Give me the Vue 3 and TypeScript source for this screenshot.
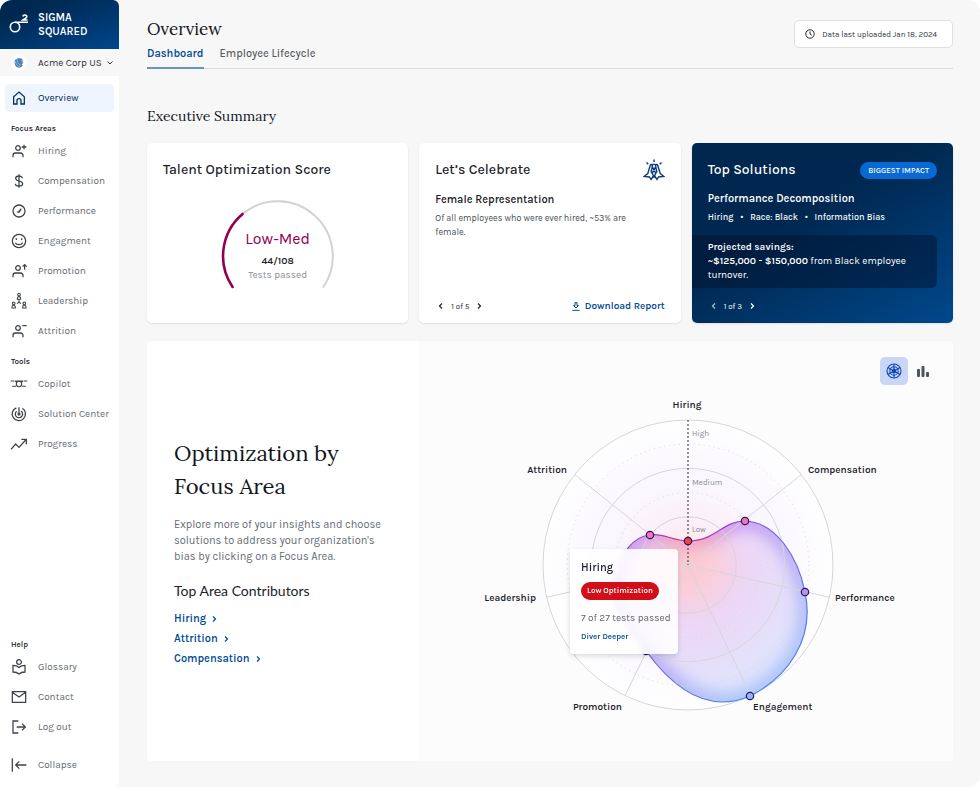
<script setup lang="ts">
import { computed, ref } from 'vue'

interface NavItem {
  label: string
  icon: string
}

const icons: Record<string, string> = {
  home: 'M4 21V10l8-7 8 7v11h-5v-5a3 3 0 0 0-6 0v5z',
  personAdd: 'M14 7.5a3.5 3.5 0 1 1-7 0a3.5 3.5 0 1 1 7 0M3 21.500v-3a3.500 3.500 0 0 1 3.500-3.500h8a3.500 3.500 0 0 1 3.500 3.500v3M19.500 2.500v7M16 6h7',
  dollar: 'M12 2v20M17 8c0-2-2-3.500-5-3.500S7 6 7 8s2 3.200 5 4 5.500 1.800 5.500 4-2.500 3.500-5.500 3.500-5.500-1.500-5.500-3.500',
  gauge: 'M21 12a9 9 0 1 1-18 0a9 9 0 1 1 18 0M10.500 13.500l1.500.5 1-1.500zM12 12.500l3.500-4',
  smile: 'M22 12a10 10 0 1 1-20 0a10 10 0 1 1 20 0M8 8v2.500M16 8v2.500M6.500 14.500c2 4 9 4 11 0',
  personUp: 'M14 7.500a3.500 3.500 0 1 1-7 0a3.500 3.500 0 1 1 7 0M3 21.500v-3a3.500 3.500 0 0 1 3.500-3.500h8a3.500 3.500 0 0 1 3.500 3.500v3M20.500 10V3M17.500 5.500l3-3 3 3',
  team: 'M14 2.500a2 2 0 1 1-4 0a2 2 0 1 1 4 0M9.500 9.500v-1.500a2.500 2.500 0 0 1 5 0v1.500zM6 15.500a2 2 0 1 1-4 0a2 2 0 1 1 4 0M1.500 22.500V21a2.500 2.500 0 0 1 5 0v1.500zM22 15.500a2 2 0 1 1-4 0a2 2 0 1 1 4 0M17.500 22.500V21a2.500 2.500 0 0 1 5 0v1.500zM12 10v4M12 13.500l-3 2.500M12 13.500l3 2.500',
  personMinus: 'M14 7.500a3.500 3.500 0 1 1-7 0a3.500 3.500 0 1 1 7 0M3 21.500v-3a3.500 3.500 0 0 1 3.500-3.500h8a3.500 3.500 0 0 1 3.500 3.500v3M17 4h6.500',
  copilot: 'M-.500 7.500H5M19 7.500h5.500M7 7.500h10M3 15.500h4.500M16.500 15.500H21M16 12a4 4 0 1 1-8 0a4 4 0 1 1 8 0M6 7.500l3 2M18 7.500l-3 2M3 15.500l-1 .5M21 15.500l1 .5',
  radar: 'M17 3.500A10 10 0 1 1 8 2.700M15 7.500a5.500 5.500 0 1 1-6.500.3M12 2v9M13.500 12a1.500 1.500 0 1 1-3 0a1.500 1.500 0 1 1 3 0M20 6a10 10 0 0 1 1 9',
  trend: 'M0 20l7-8 5 5 10-11M15.500 5H23v7.500',
  reader: 'M15.500 4.500a3.500 3.500 0 1 1-7 0a3.500 3.500 0 1 1 7 0M3 9.500c4 0 7 1.200 9 3.200 2-2 5-3.200 9-3.200v10c-4 0-7 1-9 3-2-2-5-3-9-3z',
  mail: 'M2 4h20v16H2zM2 5l10 7 10-7',
  logout: 'M11 3H3v18h8M8.500 12H21M16.500 7l5 5-5 5',
  collapse: 'M2 2v20M23 12H7M12.500 6.500L7 12l5.500 5.500',
}

const focusAreas: NavItem[] = [
  { label: 'Hiring', icon: 'personAdd' },
  { label: 'Compensation', icon: 'dollar' },
  { label: 'Performance', icon: 'gauge' },
  { label: 'Engagment', icon: 'smile' },
  { label: 'Promotion', icon: 'personUp' },
  { label: 'Leadership', icon: 'team' },
  { label: 'Attrition', icon: 'personMinus' },
]
const tools: NavItem[] = [
  { label: 'Copilot', icon: 'copilot' },
  { label: 'Solution Center', icon: 'radar' },
  { label: 'Progress', icon: 'trend' },
]
const help: NavItem[] = [
  { label: 'Glossary', icon: 'reader' },
  { label: 'Contact', icon: 'mail' },
  { label: 'Log out', icon: 'logout' },
]
const groups = [
  { title: 'Focus Areas', items: focusAreas, bottom: false },
  { title: 'Tools', items: tools, bottom: false },
  { title: 'Help', items: help, bottom: true },
]
const contributors: string[] = ['Hiring', 'Attrition', 'Compensation']

const view = ref<'radar' | 'bars'>('radar')

const RADIUS = 145
const rings = [1, 2, 3, 4, 5, 6].map((n) => ({ r: (RADIUS * n) / 6, dotted: n % 2 === 1 }))
const spokes = computed(() =>
  [1, 2, 3, 4, 5, 6].map((n) => {
    const a = (n * 2 * Math.PI) / 7
    return { x: RADIUS * Math.sin(a), y: -RADIUS * Math.cos(a) }
  }),
)
const points = [
  { x: 0, y: -24, fill: '#f2404a' },
  { x: 57, y: -44, fill: '#f573b8' },
  { x: 117, y: 27, fill: '#b295ee' },
  { x: 62, y: 131, fill: '#92b4f5' },
  { x: -42, y: 86, fill: '#92a0f5' },
  { x: -71, y: 16, fill: '#f573b8' },
  { x: -38, y: -30, fill: '#f573b8' },
]
const blob =
  'M0-24C28-24 34-44 57-44C88-43 110-8 117 27C127 74 100 112 62 131C23 148-12 127-42 86C-61 60-82 44-71 11C-67-12-56-28-38-30C-26-33-16-24 0-24Z'
const axes = [
  { label: 'Hiring', x: -1, y: -157, anchor: 'middle' },
  { label: 'Compensation', x: 120, y: -92, anchor: 'start' },
  { label: 'Performance', x: 147, y: 36, anchor: 'start' },
  { label: 'Engagement', x: 65, y: 145, anchor: 'start' },
  { label: 'Promotion', x: -66, y: 145, anchor: 'end' },
  { label: 'Leadership', x: -152, y: 36, anchor: 'end' },
  { label: 'Attrition', x: -121, y: -92, anchor: 'end' },
] as const
const levels = [
  { label: 'High', y: -129 },
  { label: 'Medium', y: -80 },
  { label: 'Low', y: -33 },
]
</script>

<template>
  <div class="app">
    <aside class="sidebar">
      <a class="brand" href="#">
        <svg class="brand-mark" viewBox="0 0 20 20" aria-hidden="true">
          <circle cx="6" cy="12" r="4.700" />
          <path d="M6 7.300h13" />
          <path d="M13.800 1.500c.4-2 4-2 4 .2 0 1.200-2 2-3.800 3.300h4.500" />
        </svg>
        <span>SIGMA<br />SQUARED</span>
      </a>
      <button class="org" type="button">
        <svg class="org-mark" viewBox="0 0 16 16" aria-hidden="true">
          <circle cx="8" cy="8" r="8" fill="#fff" />
          <path d="M4 5c2-2 5-2 8-1l-2 1.500h2.500L11 7h1.500L11 8.500h1L10.500 10H12c-1 2-3 3-5 2.500C4 12 3 8 4 5z" fill="#4d80b8" />
          <path d="M4 6c1 3 2 5 5 6M6 4c0 3 1 5 4 6.500" stroke="#a9c5e2" stroke-width=".7" fill="none" />
        </svg>
        <span>Acme Corp US</span>
        <svg class="chev" viewBox="0 0 8 8" aria-hidden="true"><path d="M1.500 2.500L4 5l2.500-2.500" /></svg>
      </button>
      <nav class="nav" aria-label="Main">
        <a class="nav-item active" href="#">
          <svg class="icon" viewBox="0 0 24 24" aria-hidden="true"><path :d="icons.home" /></svg>
          <span>Overview</span>
        </a>
        <section v-for="g in groups" :key="g.title" class="group" :class="{ bottom: g.bottom }">
          <h2>{{ g.title }}</h2>
          <a v-for="item in g.items" :key="item.label" class="nav-item" href="#">
            <svg class="icon" :class="{ thin: item.icon === 'team' || item.icon === 'copilot' }" viewBox="0 0 24 24" aria-hidden="true"><path :d="icons[item.icon]" /></svg>
            <span>{{ item.label }}</span>
          </a>
        </section>
        <button class="nav-item collapse" type="button">
          <svg class="icon" viewBox="0 0 24 24" aria-hidden="true"><path :d="icons.collapse" /></svg>
          <span>Collapse</span>
        </button>
      </nav>
    </aside>

    <main class="main">
      <header class="header">
        <div class="heading">
          <h1>Overview</h1>
          <nav class="tabs" aria-label="Sections">
            <a class="tab on" href="#">Dashboard</a>
            <a class="tab" href="#">Employee Lifecycle</a>
          </nav>
        </div>
        <div class="updated">
          <svg viewBox="0 0 10 10" aria-hidden="true"><circle cx="5" cy="5" r="4.200" /><path d="M5 2.500V5l1.800 1.300" /></svg>
          <span>Data last uploaded Jan 18, 2024</span>
        </div>
      </header>

      <h2 class="section-title">Executive Summary</h2>

      <div class="cards">
        <article class="card">
          <h3 class="card-title">Talent Optimization Score</h3>
          <div class="gauge">
            <svg viewBox="0 0 116 90" aria-hidden="true">
              <path class="track" d="M22.600 15A55 55 0 0 1 103.400 88" />
              <path class="value" d="M12.600 88A55 55 0 0 1 22.600 15" />
            </svg>
            <div class="gauge-text">
              <strong class="grade">Low-Med</strong>
              <span class="count">44/108</span>
              <span class="caption">Tests passed</span>
            </div>
          </div>
        </article>

        <article class="card">
          <div class="card-head">
            <h3 class="card-title">Let’s Celebrate</h3>
            <svg class="celebrate" viewBox="0 0 22 22" aria-hidden="true">
              <path d="M11 .5v2.500M3.500 3.500L5.300 5.300M18.500 3.500l-1.800 1.800M11 16l-3 4.500-1.500-2.500L1 17.500 4.800 14.500l2.400-8c.6-1.600 2.600-1.200 2.200.6L8 13.500M11 16l3 4.500 1.500-2.500 5.500-.5-3.800-3-2.400-8c-.6-1.600-2.600-1.200-2.200.6L14 13.500M9.400 6.500c.2-1.800 3-1.800 3.200 0l1 6L11 18l-2.600-5.500zM9 15l3.500-7M13 15L9.500 8" />
            </svg>
          </div>
          <h4 class="card-sub">Female Representation</h4>
          <p class="card-body">Of all employees who were ever hired, ~53% are female.</p>
          <footer class="card-foot">
            <div class="pager">
              <button type="button" aria-label="Previous"><svg viewBox="0 0 8 8"><path d="M5 1.500L2.500 4 5 6.500" /></svg></button>
              <span>1 of 5</span>
              <button type="button" aria-label="Next"><svg viewBox="0 0 8 8"><path d="M3 1.500L5.500 4 3 6.500" /></svg></button>
            </div>
            <a class="download" href="#">
              <svg viewBox="0 0 8 9" aria-hidden="true"><path d="M3 .6h2v2.900h1.500L4 6 1.500 3.500H3zM.5 8.300h7" /></svg>
              Download Report
            </a>
          </footer>
        </article>

        <article class="card dark">
          <div class="card-head">
            <h3 class="card-title">Top Solutions</h3>
            <span class="badge">BIGGEST IMPACT</span>
          </div>
          <h4 class="card-sub">Performance Decomposition</h4>
          <ul class="tags">
            <li>Hiring</li>
            <li>Race: Black</li>
            <li>Information Bias</li>
          </ul>
          <div class="savings">
            <strong>Projected savings:</strong><br />
            <strong>~$125,000 - $150,000</strong> from Black employee turnover.
          </div>
          <footer class="card-foot">
            <div class="pager">
              <button type="button" class="dim" aria-label="Previous"><svg viewBox="0 0 8 8"><path d="M5 1.500L2.500 4 5 6.500" /></svg></button>
              <span>1 of 3</span>
              <button type="button" aria-label="Next"><svg viewBox="0 0 8 8"><path d="M3 1.500L5.500 4 3 6.500" /></svg></button>
            </div>
          </footer>
        </article>
      </div>

      <section class="panel">
        <div class="intro">
          <h2>Optimization by Focus Area</h2>
          <p>Explore more of your insights and choose solutions to address your organization's bias by clicking on a Focus Area.</p>
          <h3>Top Area Contributors</h3>
          <ul>
            <li v-for="c in contributors" :key="c">
              <a href="#">{{ c }}<svg viewBox="0 0 8 8" aria-hidden="true"><path d="M3 1.500L5.500 4 3 6.500" /></svg></a>
            </li>
          </ul>
        </div>

        <div class="chart-side">
          <div class="switch">
            <button type="button" :class="{ on: view === 'radar' }" aria-label="Radar view" @click="view = 'radar'">
              <svg class="radar-icon" viewBox="0 0 16 16">
                <circle cx="8" cy="8" r="7" />
                <circle cx="8" cy="8" r="4.200" />
                <path d="M8 1v14M1.900 4.500l12.200 7M1.900 11.500l12.200-7M8 5.500L10.200 9.300H5.800z" />
                <circle cx="8" cy="8" r="1.500" />
              </svg>
            </button>
            <button type="button" :class="{ on: view === 'bars' }" aria-label="Bar view" @click="view = 'bars'">
              <svg class="bars-icon" viewBox="0 0 12 12">
                <rect x="0" y="4" width="3" height="8" rx="1" />
                <rect x="4.500" y="1" width="3" height="11" rx="1" />
                <rect x="9" y="7" width="3" height="5" rx="1" />
              </svg>
            </button>
          </div>

          <div class="stage">
            <svg class="radar" viewBox="0 0 421 330" role="img" aria-label="Optimization by focus area">
              <defs>
                <radialGradient id="halo" gradientUnits="userSpaceOnUse" cx="0" cy="0" r="145">
                  <stop offset="0" stop-color="#ffd3d9" stop-opacity=".7" />
                  <stop offset=".3" stop-color="#fce6f3" stop-opacity=".6" />
                  <stop offset=".55" stop-color="#f8f3ff" stop-opacity=".6" />
                  <stop offset="1" stop-color="#ffffff" stop-opacity=".9" />
                </radialGradient>
                <radialGradient id="body" gradientUnits="userSpaceOnUse" cx="0" cy="0" r="145">
                  <stop offset="0" stop-color="#fcc8d0" />
                  <stop offset=".2" stop-color="#f9cfdd" />
                  <stop offset=".4" stop-color="#edd6f6" />
                  <stop offset=".7" stop-color="#e5dffa" />
                  <stop offset="1" stop-color="#dde6fd" />
                </radialGradient>
                <radialGradient id="edge" gradientUnits="userSpaceOnUse" cx="0" cy="0" r="145">
                  <stop offset=".15" stop-color="#c43383" />
                  <stop offset=".3" stop-color="#a23fc4" />
                  <stop offset=".5" stop-color="#8450e0" />
                  <stop offset=".75" stop-color="#7468e6" />
                  <stop offset="1" stop-color="#4d80ea" />
                </radialGradient>
                <radialGradient id="glow" gradientUnits="userSpaceOnUse" cx="0" cy="0" r="145">
                  <stop offset=".15" stop-color="#f08aa8" />
                  <stop offset=".4" stop-color="#b56cee" />
                  <stop offset=".7" stop-color="#a08af4" />
                  <stop offset="1" stop-color="#86aef8" />
                </radialGradient>
                <clipPath id="inside"><path :d="blob" /></clipPath>
                <filter id="soft" x="-30%" y="-30%" width="160%" height="160%"><feGaussianBlur stdDeviation="8" /></filter>
              </defs>
              <g transform="translate(213 170)">
                <circle r="145" fill="url(#halo)" />
                <path :d="blob" fill="url(#body)" />
                <g clip-path="url(#inside)">
                  <path :d="blob" fill="none" stroke="url(#glow)" stroke-width="14" filter="url(#soft)" opacity=".75" />
                </g>
                <circle v-for="ring in rings" :key="ring.r" class="ring" :class="{ dotted: ring.dotted }" :r="ring.r" />
                <line v-for="s in spokes" :key="s.x" class="ring" x1="0" y1="0" :x2="s.x" :y2="s.y" />
                <path :d="blob" fill="none" stroke="url(#edge)" stroke-width="1.200" />
                <line class="pointer" x1="0" y1="-145" x2="0" y2="0" />
                <circle v-for="p in points" :key="p.x" class="dot" :cx="p.x" :cy="p.y" r="3.700" :fill="p.fill" />
                <text v-for="l in levels" :key="l.label" class="level" x="4" :y="l.y">{{ l.label }}</text>
                <text v-for="a in axes" :key="a.label" class="axis" :x="a.x" :y="a.y" :text-anchor="a.anchor">{{ a.label }}</text>
              </g>
            </svg>
            <div class="tooltip">
              <h4>Hiring</h4>
              <span class="low">Low Optimization</span>
              <p>7 of 27 tests passed</p>
              <a href="#">Diver Deeper</a>
            </div>
          </div>
        </div>
      </section>
    </main>
  </div>
</template>

<style>
body {
  margin: 0;
  background: #fff;
}
</style>

<style scoped>
* {
  box-sizing: border-box;
}
h1, h2, h3, h4, p, ul {
  margin: 0;
  padding: 0;
}
ul {
  list-style: none;
}
a {
  color: inherit;
  text-decoration: none;
}
button {
  font: inherit;
  color: inherit;
  background: none;
  border: 0;
  padding: 0;
  cursor: pointer;
}
svg {
  display: block;
  flex: none;
}
.app {
  display: flex;
  min-height: 100vh;
  font-family: Karla, Inter, "Liberation Sans", sans-serif;
  font-size: 10px;
  color: #1c222b;
  background: #f7f7f7;
  border-radius: 12px;
  overflow: hidden;
}

/* Sidebar */
.sidebar {
  display: flex;
  flex-direction: column;
  flex: 0 0 119px;
  background: #fff;
  border-radius: 0 0 6px 0;
}
.brand {
  display: flex;
  align-items: center;
  gap: 9px;
  height: 49px;
  padding-left: 9px;
  color: #fff;
  font-size: 11px;
  font-weight: 600;
  line-height: 14px;
  background: linear-gradient(160deg, #002750 20%, #00468c);
  border-radius: 0 6px 0 0;
}
.brand-mark {
  width: 20px;
  height: 20px;
  overflow: visible;
  fill: none;
  stroke: #fff;
  stroke-width: 1.6;
}
.org {
  display: flex;
  align-items: center;
  height: 27px;
  padding: 0 5px 0 11px;
  gap: 11px;
  background: #f7f7f7;
  white-space: nowrap;
  color: #2c323b;
}
.org span {
  flex: 1;
  text-align: left;
}
.org-mark {
  width: 16px;
  height: 16px;
}
.chev {
  width: 8px;
  height: 8px;
  margin-left: -8px;
  fill: none;
  stroke: #333;
}
.nav {
  display: flex;
  flex: 1;
  flex-direction: column;
  padding: 8px 5px 7px;
}
.nav-item {
  display: flex;
  align-items: center;
  gap: 11px;
  height: 30px;
  padding-left: 6px;
  color: #666b72;
  white-space: nowrap;
}
.nav-item.active {
  height: 28px;
  color: #002f62;
  background: #eff5fe;
  border-radius: 4px;
}
.icon {
  width: 16px;
  height: 16px;
  overflow: visible;
  fill: none;
  stroke: #3d434a;
  stroke-width: 1.9;
}
.icon.thin {
  stroke-width: 1.6;
}
.active .icon {
  stroke: #002f62;
}
.group {
  padding-top: 9px;
}
.group + .group {
  padding-top: 8px;
}
.group.bottom {
  margin-top: auto;
}
.group h2 {
  padding-left: 6px;
  font-size: 8px;
  font-weight: 600;
  line-height: 15px;
}
.collapse {
  margin-top: 8px;
}

/* Header */
.main {
  flex: 1;
  min-width: 0;
  padding: 17px 27px 26px 28px;
}
.header {
  display: flex;
  align-items: flex-start;
  justify-content: space-between;
  border-bottom: 1px solid #d9dbdd;
}
h1, .section-title, .intro h2 {
  font-family: Lora, "Liberation Serif", serif;
  font-weight: 400;
  color: #12161d;
}
h1 {
  font-size: 17px;
  line-height: 24px;
}
.tabs {
  display: flex;
  gap: 16px;
  margin-bottom: -1px;
  line-height: 26px;
  font-weight: 500;
  font-size: 11px;
  color: #565b62;
}
.tab.on {
  color: #004a94;
  font-weight: 600;
  border-bottom: 2px solid #6a93c0;
}
.updated {
  display: flex;
  align-items: center;
  gap: 7px;
  height: 28px;
  margin-top: 3px;
  padding: 0 15px 0 10px;
  border: 1px solid #dddfe1;
  border-radius: 5px;
  background: #fff;
  font-size: 8px;
  color: #2c323b;
}
.updated svg {
  width: 10px;
  height: 10px;
  fill: none;
  stroke: #22272e;
}
.section-title {
  margin: 35px 0 15px;
  font-size: 14px;
  line-height: 24px;
}

/* Summary cards */
.cards {
  display: grid;
  grid-template-columns: repeat(3, 1fr);
  gap: 11px;
}
.card {
  display: flex;
  flex-direction: column;
  min-height: 180px;
  padding: 16px;
  border-radius: 5px;
  background: #fff;
  box-shadow: 0 1px 2px rgba(0, 0, 0, 0.1);
}
.card-head {
  display: flex;
  align-items: center;
  justify-content: space-between;
}
.card-title {
  font-size: 14px;
  font-weight: 500;
  line-height: 22px;
}
.card-sub {
  margin-top: 11px;
  font-size: 11px;
  font-weight: 600;
  line-height: 16px;
}
.card-body {
  margin-top: 3px;
  padding-right: 16px;
  font-size: 9px;
  line-height: 14px;
  color: #4b5057;
}
.celebrate {
  width: 22px;
  height: 22px;
  fill: none;
  stroke: #0b3c7d;
  stroke-width: 1.4;
}
.card-foot {
  display: flex;
  align-items: center;
  justify-content: space-between;
  height: 16px;
  margin-top: auto;
  margin-bottom: -7px;
}
.pager {
  display: flex;
  align-items: center;
  gap: 6px;
  padding-left: 2px;
  font-size: 8px;
}
.pager svg, .intro li svg {
  width: 8px;
  height: 8px;
  fill: none;
  stroke: currentColor;
  stroke-width: 1.2;
}
.pager .dim {
  opacity: 0.7;
}
.download {
  display: flex;
  align-items: center;
  gap: 5px;
  font-weight: 600;
  font-size: 10px;
  color: #004a94;
}
.download svg {
  width: 8px;
  height: 9px;
  fill: none;
  stroke: currentColor;
}
.gauge {
  display: grid;
  justify-items: center;
  margin-top: 18px;
}
.gauge > * {
  grid-area: 1 / 1;
}
.gauge svg {
  width: 116px;
  height: 90px;
  fill: none;
  stroke-linecap: round;
}
.track {
  stroke: #d2d3d4;
  stroke-width: 2;
}
.value {
  stroke: #93004f;
  stroke-width: 2.6;
}
.gauge-text {
  display: flex;
  flex-direction: column;
  align-items: center;
  padding-top: 29px;
  line-height: 14px;
}
.grade {
  font-size: 16px;
  font-weight: 400;
  line-height: 22px;
  color: #93004f;
}
.count {
  margin-top: 4px;
  font-weight: 600;
}
.caption {
  color: #8b8f94;
}
.dark {
  color: #fff;
  background: linear-gradient(150deg, #00274f 40%, #00488c);
}
.badge {
  padding: 0 8px;
  border-radius: 9px;
  background: #0969d2;
  font-size: 8px;
  font-weight: 500;
  line-height: 17px;
}
.dark .card-sub {
  margin-top: 10px;
}
.tags {
  display: flex;
  gap: 7px;
  margin-top: 3px;
  font-size: 9px;
  font-weight: 500;
  line-height: 14px;
}
.tags li + li::before {
  content: "•";
  margin-right: 7px;
}
.savings {
  margin: 11px 0 0 -16px;
  padding: 5px 16px 6px;
  border-radius: 0 6px 6px 0;
  background: rgba(0, 18, 46, 0.5);
  line-height: 14px;
}
.savings strong {
  font-weight: 600;
}

/* Focus area panel */
.panel {
  display: grid;
  grid-template-columns: 271px 1fr;
  margin-top: 18px;
  border-radius: 4px;
  overflow: hidden;
  background: #fff;
}
.intro {
  display: flex;
  flex-direction: column;
  justify-content: center;
  padding: 4px 32px 0 27px;
}
.intro h2 {
  font-size: 22px;
  line-height: 33px;
}
.intro p {
  margin-top: 14px;
  font-size: 11px;
  line-height: 16px;
  color: #666b71;
}
.intro h3 {
  margin: 16px 0 8px;
  font-family: Lato, sans-serif;
  font-size: 14px;
  font-weight: 400;
  line-height: 20px;
}
.intro li a {
  display: flex;
  align-items: center;
  gap: 4px;
  font-weight: 600;
  font-size: 11px;
  line-height: 20px;
  color: #004a94;
}
.chart-side {
  padding: 16px 16px 36px;
  background: #fcfcfc;
}
.switch {
  display: flex;
  justify-content: flex-end;
  gap: 1px;
}
.switch button {
  display: grid;
  place-items: center;
  width: 28px;
  height: 28px;
  border-radius: 5px;
}
.switch .on {
  background: #c9d6f6;
}
.radar-icon {
  width: 16px;
  height: 16px;
  fill: none;
  stroke: #0b47b5;
  stroke-width: 1.1;
}
.bars-icon {
  width: 12px;
  height: 12px;
  fill: #50555b;
}
.stage {
  position: relative;
  width: 421px;
  margin: 10px auto 0;
}
.radar {
  width: 421px;
  height: 330px;
}
.ring {
  fill: none;
  stroke: #d6d6da;
  stroke-width: 1;
}
.ring.dotted {
  stroke-dasharray: 1 4;
}
.pointer {
  stroke: #5b5b60;
  stroke-width: 1.3;
  stroke-dasharray: 2 2;
}
.dot {
  stroke: #2b1760;
  stroke-width: 1.2;
}
.axis {
  font-size: 10px;
  font-weight: 600;
  fill: #1c222b;
}
.level {
  font-size: 8px;
  fill: #85898e;
}
.tooltip {
  position: absolute;
  left: 95px;
  top: 154px;
  display: flex;
  flex-direction: column;
  align-items: flex-start;
  width: 108px;
  padding: 11px 10px 10px 11px;
  border-radius: 4px;
  background: rgba(255, 255, 255, 0.88);
  backdrop-filter: blur(3px);
  box-shadow: 0 2px 5px rgba(30, 30, 60, 0.16);
  white-space: nowrap;
}
.tooltip h4 {
  font-size: 11px;
  font-weight: 600;
  line-height: 16px;
}
.low {
  margin-top: 6px;
  padding: 0 6px;
  border-radius: 9px;
  background: #d20f18;
  color: #fff;
  font-size: 8px;
  font-weight: 600;
  line-height: 18px;
}
.tooltip p {
  margin-top: 11px;
  line-height: 14px;
  color: #5f646b;
}
.tooltip a {
  margin-top: 5px;
  font-size: 8px;
  font-weight: 600;
  line-height: 14px;
  color: #004a94;
}
</style>
